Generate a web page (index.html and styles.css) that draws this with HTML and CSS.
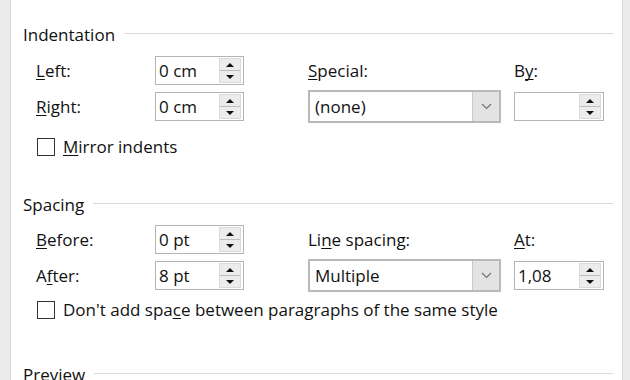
FILE: index.html
```html
<!DOCTYPE html>
<html lang="en">
<head>
  <meta charset="UTF-8" />
  <title>Paragraph</title>
  <link rel="stylesheet" href="styles.css">
</head>
<body>
  <div class="dialog">
    <section class="group first">
      <div class="group-head"><span class="title">Indentation</span><i class="rule"></i></div>
      <div class="fields">
        <label class="lbl"><u>L</u>eft:</label>
        <div class="spin"><span class="val">0 cm</span><span class="arrows"><b class="up"></b><b class="down"></b></span></div>
        <label class="lbl col4"><u>S</u>pecial:</label>
        <label class="lbl col6">B<u>y</u>:</label>

        <label class="lbl"><u>R</u>ight:</label>
        <div class="spin"><span class="val">0 cm</span><span class="arrows"><b class="up"></b><b class="down"></b></span></div>
        <div class="select col4"><span class="val">(none)</span><span class="drop"><svg width="11" height="7" viewBox="0 0 11 7"><path d="M1 1 L5.5 5.5 L10 1" fill="none" stroke="#6f6f6f" stroke-width="1.1"/></svg></span></div>
        <div class="spin col6"><span class="val"></span><span class="arrows"><b class="up"></b><b class="down"></b></span></div>
      </div>
      <div class="check mirror"><span class="box"></span><span><u>M</u>irror indents</span></div>
    </section>

    <section class="group second">
      <div class="group-head"><span class="title">Spacing</span><i class="rule"></i></div>
      <div class="fields">
        <label class="lbl"><u>B</u>efore:</label>
        <div class="spin"><span class="val">0 pt</span><span class="arrows"><b class="up"></b><b class="down"></b></span></div>
        <label class="lbl col4">Li<u>n</u>e spacing:</label>
        <label class="lbl col6"><u>A</u>t:</label>

        <label class="lbl">A<u>f</u>ter:</label>
        <div class="spin"><span class="val">8 pt</span><span class="arrows"><b class="up"></b><b class="down"></b></span></div>
        <div class="select col4"><span class="val">Multiple</span><span class="drop"><svg width="11" height="7" viewBox="0 0 11 7"><path d="M1 1 L5.5 5.5 L10 1" fill="none" stroke="#6f6f6f" stroke-width="1.1"/></svg></span></div>
        <div class="spin col6"><span class="val">1,08</span><span class="arrows"><b class="up"></b><b class="down"></b></span></div>
      </div>
      <div class="check same"><span class="box"></span><span>Don't add spa<u>c</u>e between paragraphs of the same style</span></div>
    </section>

    <section class="group">
      <div class="group-head"><span class="title">Preview</span><i class="rule"></i></div>
    </section>
  </div>
</body>
</html>
```

FILE: styles.css
```css
body {
  margin: 0;
  background: #ececec;
  font-family: 'Open Sans', 'Noto Sans', sans-serif;
  font-size: 17px;
  line-height: 20px;
  color: #111;
  height: 380px;
  overflow: hidden;
}
.dialog {
  margin-left: 10px;
  width: 602px;
  height: 400px;
  background: #fff;
  border-left: 1px solid #d6d6d6;
  border-right: 1px solid #d6d6d6;
  padding: 23px 9px 0 0;
  box-sizing: content-box;
  box-shadow: 13px 0 0 #ececec, 14px 0 0 #8a8a8a;
}
.group {
  padding-left: 12px;
}
.group.first {
  padding-bottom: 37px;
}
.group.second {
  padding-bottom: 44px;
}
.group-head {
  display: flex;
  align-items: center;
  height: 20px;
  gap: 9px;
}
.group-head .title {
  padding-top: 4px;
}
.group-head .rule {
  flex: 1;
  height: 1px;
  background: #dcdcdc;
}
.fields {
  display: grid;
  grid-template-columns: 119px 89px 64px 193px 13px 90px;
  grid-template-rows: 29px 33px;
  row-gap: 5px;
  align-items: center;
  margin-left: 13px;
  margin-top: 13px;
}
.second .fields {
  margin-top: 12px;
}
.col4 { grid-column: 4; }
.col6 { grid-column: 6; }
u {
  text-underline-offset: 2px;
  text-decoration-skip-ink: none;
}
.spin {
  height: 29px;
  box-sizing: border-box;
  border: 1px solid #b4b4b4;
  display: flex;
  align-items: center;
  justify-content: space-between;
  padding: 1px 2px 1px 3px;
}
.spin .arrows {
  width: 22px;
  height: 25px;
  display: flex;
  flex-direction: column;
  background: #ececec;
  border: 1px solid #dadada;
  box-sizing: border-box;
}
.spin .arrows b {
  flex: 1;
  display: flex;
  align-items: center;
  justify-content: center;
}
.spin .arrows b.up {
  border-bottom: 1px solid #bdbdbd;
}
.spin .arrows b.up::after,
.spin .arrows b.down::after {
  content: "";
  border-left: 4px solid transparent;
  border-right: 4px solid transparent;
}
.spin .arrows b.up::after {
  border-bottom: 4px solid #111;
}
.spin .arrows b.down::after {
  border-top: 4px solid #111;
}
.select {
  height: 33px;
  box-sizing: border-box;
  border: 2px solid #b9b9b9;
  display: flex;
  align-items: center;
  justify-content: space-between;
  padding-left: 5px;
}
.select .drop {
  width: 26px;
  align-self: stretch;
  background: #e3e3e3;
  border-left: 1px solid #c9c9c9;
  display: flex;
  align-items: center;
  justify-content: center;
}
.check {
  display: flex;
  align-items: center;
  gap: 8px;
  margin-left: 14px;
  height: 18px;
}
.check.mirror {
  margin-top: 15px;
}
.check.same {
  margin-top: 9px;
}
.check .box {
  width: 18px;
  height: 18px;
  box-sizing: border-box;
  border: 1px solid #333;
  background: #fff;
}
```
